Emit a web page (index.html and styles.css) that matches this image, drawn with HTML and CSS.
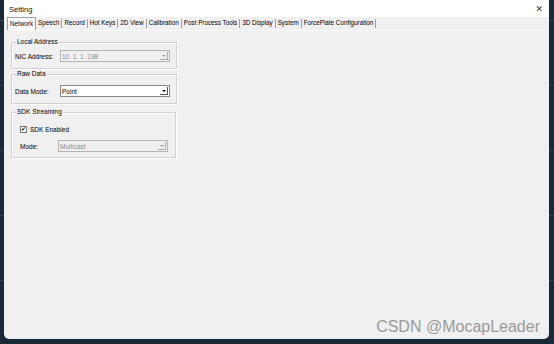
FILE: index.html
```html
<!DOCTYPE html>
<html>
<head>
    <meta charset="UTF-8">
    <title>Setting</title>
    <link rel="stylesheet" href="styles.css">
</head>
<body>
<div class="window">
    <div class="titlebar">
        <span class="title">Setting</span>
        <span class="close">&#x2715;</span>
    </div>
    <div class="tabs">
        <span class="tab active">Network</span>
        <span class="tab">Speech</span>
        <span class="tab">Record</span>
        <span class="tab">Hot Keys</span>
        <span class="tab">2D View</span>
        <span class="tab">Calibration</span>
        <span class="tab">Post Process Tools</span>
        <span class="tab">3D Display</span>
        <span class="tab">System</span>
        <span class="tab">ForcePlate Configuration</span>
    </div>
    <div class="panel">
        <fieldset class="group g-local">
            <legend>Local Address</legend>
            <div class="row">
                <label>NIC Address:</label>
                <div class="combo disabled"><span>10. 1. 1. 198</span><i class="arrow"></i></div>
            </div>
        </fieldset>
        <fieldset class="group g-raw">
            <legend>Raw Data</legend>
            <div class="row">
                <label>Data Mode:</label>
                <div class="combo"><span>Point</span><i class="arrow"></i></div>
            </div>
        </fieldset>
        <fieldset class="group g-sdk">
            <legend>SDK Streaming</legend>
            <div class="check-row">
                <span class="check">&#x2714;</span>
                <label>SDK Enabled</label>
            </div>
            <div class="row mode">
                <label>Mode:</label>
                <div class="combo disabled"><span>Multicast</span><i class="arrow"></i></div>
            </div>
        </fieldset>
    </div>
    <div class="mark">CSDN @MocapLeader</div>
</div>
</body>
</html>
```
FILE: styles.css
```css
body {
    margin: 0;
    width: 554px;
    height: 344px;
    overflow: hidden;
    background-color: #1a2937;
    background-image:
        linear-gradient(#2c3e50 1px, transparent 1px);
    background-size: 100% 65px;
    background-position: 0 20px;
    font-family: "Liberation Sans", "DejaVu Sans", sans-serif;
    font-size: 6.5px;
    color: #000;
}

.window {
    margin-left: 4px;
    width: 545px;
    height: 339px;
    background: #f0f0f0;
    border-radius: 0 0 5px 5px;
    position: relative;
    display: flex;
    flex-direction: column;
}

.titlebar {
    height: 17px;
    background: #fff;
    display: flex;
    align-items: center;
    justify-content: space-between;
    padding: 1px 6px 0 5px;
    box-sizing: border-box;
}

.title {
    font-size: 7.5px;
    color: #111;
}

.close {
    font-size: 9px;
    color: #333;
}

.tabs {
    display: flex;
    height: 13px;
    padding-left: 3px;
    border-bottom: 1px solid #fafafa;
    align-items: stretch;
    font-size: 6.3px;
}

.tab {
    padding: 0 2px;
    display: flex;
    align-items: center;
    border-right: 1px solid #a0a0a0;
    margin: 2px 0;
    line-height: 1;
}

.tab.active {
    margin: 0;
    border: 1px solid #a0a0a0;
    border-bottom: none;
    background: #fff;
    padding: 0 2px;
}

.panel {
    padding: 7px 0 0 7px;
    display: flex;
    flex-direction: column;
}

.group {
    width: 154px;
    margin: 0;
    border: 1px solid #d0d0d0;
    box-shadow: inset 1px 1px 0 #fff, 1px 1px 0 #fff;
    padding: 0 6px 2px 3px;
}

.group legend {
    padding: 0 1px;
    margin-left: 1px;
    line-height: 8px;
    height: 8px;
}

.g-raw {
    margin-top: 1px;
}

.g-sdk {
    margin-top: 4px;
    padding-bottom: 1px;
}

.row {
    display: flex;
    align-items: center;
    height: 20px;
}

.row label {
    width: 45px;
}

.g-raw .row {
    margin-top: 3px;
}

.combo {
    width: 110px;
    height: 12px;
    box-sizing: border-box;
    border: 1px solid #8a8a8a;
    background: #fff;
    display: flex;
    align-items: center;
    justify-content: space-between;
    padding-left: 1px;
}

.combo.disabled {
    background: #f0f0f0;
    border-color: #b4b4b4;
    color: #8c8c8c;
}

.arrow {
    width: 8px;
    height: 8px;
    margin-right: 1px;
    border-right: 1px solid #555;
    border-bottom: 1px solid #555;
    box-sizing: border-box;
    position: relative;
}

.arrow::after {
    content: "";
    position: absolute;
    left: 2px;
    top: 3px;
    border-left: 2px solid transparent;
    border-right: 2px solid transparent;
    border-top: 2px solid #000;
}

.disabled .arrow {
    border-color: #aaa;
}

.disabled .arrow::after {
    border-top-color: #999;
}

.check-row {
    display: flex;
    align-items: center;
    gap: 3px;
    height: 14px;
    margin-top: 6px;
    padding-left: 5px;
}

.check {
    width: 7px;
    height: 7px;
    box-sizing: border-box;
    border: 1px solid #777;
    background: #fff;
    font-size: 6px;
    line-height: 5px;
    text-align: center;
}

.row.mode {
    padding-left: 5px;
}

.row.mode label {
    width: 38px;
}

.mark {
    position: absolute;
    right: 9px;
    bottom: 3px;
    font-family: "Liberation Sans", sans-serif;
    font-size: 16px;
    color: #9a9a9a;
}
```
